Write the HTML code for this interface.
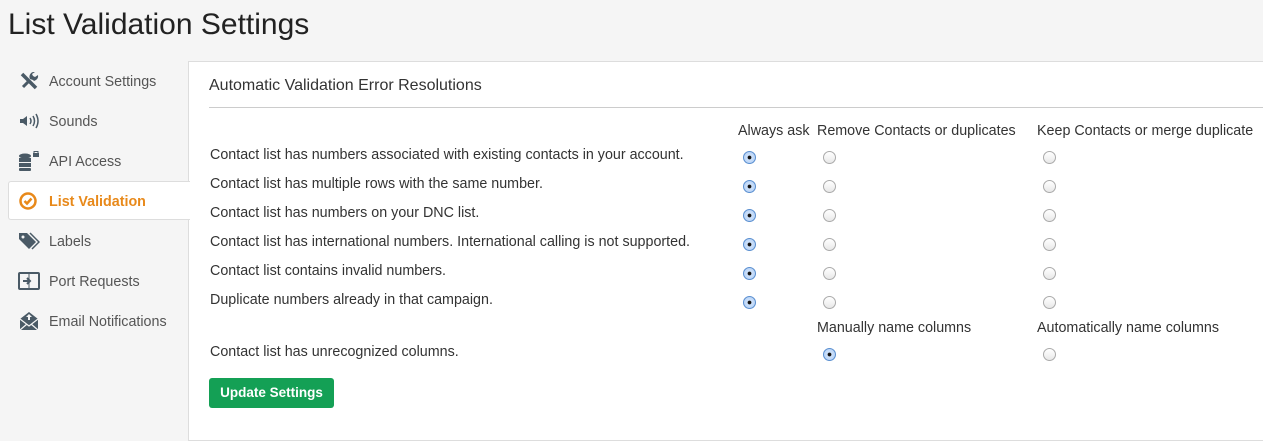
<!DOCTYPE html>
<html><head><style>
*{margin:0;padding:0;box-sizing:border-box}
body{width:1263px;height:428px;background:#f5f5f5;font-family:"Liberation Sans",Helvetica,Arial,sans-serif;color:#333;position:relative;overflow:hidden}
.a{position:absolute;white-space:nowrap}
h1{position:absolute;left:8px;top:8px;font-size:30px;font-weight:normal;color:#222}
.panel{position:absolute;left:188px;top:61px;width:1080px;height:380px;background:#fff;border:1px solid #ddd}
.nav{position:absolute;left:49px;font-size:14.3px;color:#555}
.ic{position:absolute;left:18px;width:22px;height:22px}
.active{position:absolute;left:8px;top:181px;width:182px;height:39px;background:#fff;border:1px solid #ddd;border-right:none;border-radius:3px 0 0 3px}
.t{font-size:14.3px;color:#333}
.r{position:absolute;width:13px;height:13px;border-radius:50%;border:1px solid #aaa;background:linear-gradient(#fff,#e8e8e8)}
.r.on{border-color:#5a8fd0;background:radial-gradient(circle,#111 0 1.6px,#cfe2fb 2.2px,#a9c9f2 100%)}
.btn{position:absolute;left:209px;top:378px;width:125px;height:30px;background:#14a055;border-radius:3px;color:#fff;font-size:13.5px;font-weight:bold;text-align:center;line-height:30px}
</style></head><body>
<h1>List Validation Settings</h1>
<div class="panel"></div>
<div class="active"></div>

<svg class="ic" style="top:70px" viewBox="0 0 22 22"><path d="M4 4l14 14" stroke="#4a5a66" stroke-width="3.5"/><path d="M5 17l7-7" stroke="#4a5a66" stroke-width="3"/><path d="M15 2a5 5 0 0 0-3 7l3 1 1 1 2-1a5 5 0 0 0 2-5l-3 2-2-1-1-2 3-2z" fill="#4a5a66"/></svg>
<div class="nav" style="top:74px">Account Settings</div>
<svg class="ic" style="top:110px" viewBox="0 0 22 22"><path d="M2 9h3l4-3v10l-4-3H2z" fill="#4a5a66"/><path d="M12 8q2 3 0 6M15 6q3 5 0 10M18 4q4 7 0 14" stroke="#4a5a66" stroke-width="1.5" fill="none"/></svg>
<div class="nav" style="top:114px">Sounds</div>
<svg class="ic" style="top:150px" viewBox="0 0 22 22"><ellipse cx="7" cy="6" rx="6" ry="2.5" fill="#4a5a66"/><rect x="1" y="8" width="12" height="4" fill="#4a5a66"/><rect x="1" y="13" width="12" height="4" fill="#4a5a66"/><rect x="1" y="18" width="12" height="3" rx="1" fill="#4a5a66"/><rect x="15" y="3" width="6" height="4" fill="#4a5a66"/><path d="M16 3V1.5h4V3" stroke="#4a5a66" fill="none"/></svg>
<div class="nav" style="top:154px">API Access</div>
<svg class="ic" style="top:190px" viewBox="0 0 22 22"><circle cx="10" cy="11" r="7.5" stroke="#e8891a" stroke-width="2.5" fill="none"/><path d="M6.5 11l2.5 2.5 4.5-5" stroke="#e8891a" stroke-width="2.5" fill="none"/></svg>
<div class="nav" style="top:194px;color:#e8891a;font-weight:bold">List Validation</div>
<svg class="ic" style="top:230px" viewBox="0 0 22 22"><path d="M1 3h8l9 9-7 7-10-10z" fill="#4a5a66"/><circle cx="5" cy="7" r="1.5" fill="#f5f5f5"/><path d="M12 3l9 9-7 7" stroke="#4a5a66" stroke-width="1.5" fill="none"/></svg>
<div class="nav" style="top:234px">Labels</div>
<svg class="ic" style="top:270px" viewBox="0 0 22 22"><rect x="1" y="3" width="20" height="16" rx="1" stroke="#4a5a66" stroke-width="2" fill="none"/><path d="M11 3v16" stroke="#4a5a66"/><path d="M5 11h7M9 8l3 3-3 3" stroke="#4a5a66" stroke-width="2" fill="none"/></svg>
<div class="nav" style="top:274px">Port Requests</div>
<svg class="ic" style="top:310px" viewBox="0 0 22 22"><path d="M2 9l9-7 9 7v11H2z" fill="#4a5a66"/><path d="M2 9l9 7 9-7M2 20l7-6M20 20l-7-6" stroke="#f5f5f5" stroke-width="1.2" fill="none"/><path d="M11 4l3 3h-2v3h-2V7H8z" fill="#f5f5f5"/></svg>
<div class="nav" style="top:314px">Email Notifications</div>

<div class="a" style="left:209px;top:77px;font-size:16px;color:#333">Automatic Validation Error Resolutions</div>
<div class="a" style="left:209px;top:107px;width:1054px;height:1px;background:#ccc"></div>

<div class="a t" style="left:738px;top:123px">Always ask</div>
<div class="a t" style="left:817px;top:123px">Remove Contacts or duplicates</div>
<div class="a t" style="left:1037px;top:123px">Keep Contacts or merge duplicate</div>

<div class="a t" style="left:210px;top:147px">Contact list has numbers associated with existing contacts in your account.</div>
<div class="a t" style="left:210px;top:176px">Contact list has multiple rows with the same number.</div>
<div class="a t" style="left:210px;top:205px">Contact list has numbers on your DNC list.</div>
<div class="a t" style="left:210px;top:234px">Contact list has international numbers. International calling is not supported.</div>
<div class="a t" style="left:210px;top:263px">Contact list contains invalid numbers.</div>
<div class="a t" style="left:210px;top:292px">Duplicate numbers already in that campaign.</div>

<div class="r on" style="left:743px;top:151px"></div><div class="r" style="left:823px;top:151px"></div><div class="r" style="left:1043px;top:151px"></div>
<div class="r on" style="left:743px;top:180px"></div><div class="r" style="left:823px;top:180px"></div><div class="r" style="left:1043px;top:180px"></div>
<div class="r on" style="left:743px;top:209px"></div><div class="r" style="left:823px;top:209px"></div><div class="r" style="left:1043px;top:209px"></div>
<div class="r on" style="left:743px;top:238px"></div><div class="r" style="left:823px;top:238px"></div><div class="r" style="left:1043px;top:238px"></div>
<div class="r on" style="left:743px;top:267px"></div><div class="r" style="left:823px;top:267px"></div><div class="r" style="left:1043px;top:267px"></div>
<div class="r on" style="left:743px;top:296px"></div><div class="r" style="left:823px;top:296px"></div><div class="r" style="left:1043px;top:296px"></div>

<div class="a t" style="left:817px;top:320px">Manually name columns</div>
<div class="a t" style="left:1037px;top:320px">Automatically name columns</div>
<div class="a t" style="left:210px;top:344px">Contact list has unrecognized columns.</div>
<div class="r on" style="left:823px;top:348px"></div><div class="r" style="left:1043px;top:348px"></div>

<div class="btn">Update Settings</div>
</body></html>
